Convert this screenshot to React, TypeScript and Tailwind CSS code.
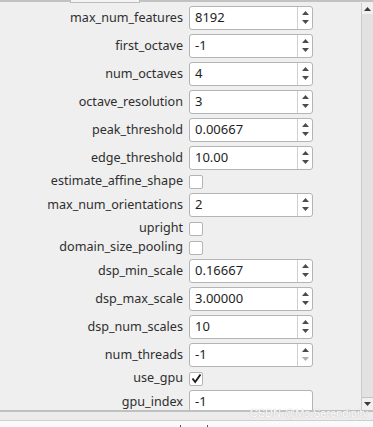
import React from "react";

type Row =
  | { kind: "spin"; label: string; value: string; downDisabled?: boolean }
  | { kind: "check"; label: string; checked?: boolean }
  | { kind: "line"; label: string; value: string };

const rows: Row[] = [
  { kind: "spin", label: "max_num_features", value: "8192" },
  { kind: "spin", label: "first_octave", value: "-1" },
  { kind: "spin", label: "num_octaves", value: "4" },
  { kind: "spin", label: "octave_resolution", value: "3" },
  { kind: "spin", label: "peak_threshold", value: "0.00667" },
  { kind: "spin", label: "edge_threshold", value: "10.00" },
  { kind: "check", label: "estimate_affine_shape" },
  { kind: "spin", label: "max_num_orientations", value: "2" },
  { kind: "check", label: "upright" },
  { kind: "check", label: "domain_size_pooling" },
  { kind: "spin", label: "dsp_min_scale", value: "0.16667" },
  { kind: "spin", label: "dsp_max_scale", value: "3.00000" },
  { kind: "spin", label: "dsp_num_scales", value: "10" },
  { kind: "spin", label: "num_threads", value: "-1", downDisabled: true },
  { kind: "check", label: "use_gpu", checked: true },
  { kind: "line", label: "gpu_index", value: "-1" },
];

function Arrow({ up, color }: { up: boolean; color: string }) {
  return (
    <svg width="7" height="4" viewBox="0 0 7 4" className="block">
      {up ? (
        <polygon points="0,4 7,4 3.5,0" fill={color} />
      ) : (
        <polygon points="0,0 7,0 3.5,4" fill={color} />
      )}
    </svg>
  );
}

function Field({ row }: { row: Row }) {
  if (row.kind === "check") {
    return (
      <div className="w-[14px] h-[14px] border border-[#b4b4b4] rounded-[2px] bg-white flex items-center justify-center">
        {row.checked && (
          <svg width="11" height="11" viewBox="0 0 11 11">
            <path d="M1.5 5.5 L4.2 9 L9.5 1.5" fill="none" stroke="#1a1a1a" strokeWidth="1.9" />
          </svg>
        )}
      </div>
    );
  }
  return (
    <div className="w-[124px] h-[24px] border border-[#b4b4b4] rounded-[3px] bg-white flex items-stretch">
      <div className="flex-1 flex items-center pl-[5px] text-[13px] text-[#1e1e1e]">{row.value}</div>
      {row.kind === "spin" && (
        <div className="w-[15px] border-l border-[#d0d0d0] flex flex-col items-center pt-[4px] gap-[5px]">
          <Arrow up color="#4c4c4c" />
          <Arrow up={false} color={row.downDisabled ? "#b0b0b0" : "#4c4c4c"} />
        </div>
      )}
    </div>
  );
}

export default function App() {
  return (
    <div
      className="w-[373px] h-[427px] bg-[#efefef] overflow-hidden flex flex-col"
      style={{ fontFamily: '"Noto Sans", "DejaVu Sans", sans-serif' }}
    >
      {/* top strip */}
      <div className="h-[3px] flex shrink-0">
        <div className="w-[70px] border-t-[2px] border-[#c2c2c2]" />
        <div className="w-[70px] border-x border-b border-[#bcbcbc] bg-[#f4f4f4]" />
        <div className="flex-1 border-t-[2px] border-[#c2c2c2]" />
      </div>
      {/* main */}
      <div className="h-[407px] flex shrink-0">
        <div className="flex-1 overflow-hidden pt-[3px]">
          <div className="flex flex-col gap-[4px]">
            {rows.map((r) => (
              <div key={r.label} className={`flex items-center ${r.kind === "check" ? "h-[15px]" : "h-[24px]"}`}>
                <div className="w-[183px] text-right text-[12.6px] text-[#2e2e2e] leading-none whitespace-nowrap">
                  {r.label}
                </div>
                <div className="ml-[6px]">
                  <Field row={r} />
                </div>
              </div>
            ))}
          </div>
        </div>
        {/* scrollbar */}
        <div className="w-[12px] border-l border-[#cdcdcd] flex flex-col">
          <div className="h-[11px] flex items-center justify-center bg-[#f0f0f0]">
            <Arrow up color="#3a3a3a" />
          </div>
          <div className="flex-1 bg-[#e2e2e2] border-b border-[#c4c4c4]" />
          <div className="h-[12px] flex items-center justify-center bg-[#f0f0f0]">
            <Arrow up={false} color="#3a3a3a" />
          </div>
        </div>
      </div>
      {/* bottom */}
      <div className="h-[2px] bg-[#c0c0c0] shrink-0" />
      <div className="h-[8px] bg-[#ececec] shrink-0 relative">
        <div
          className="absolute right-[5px] top-[-4px] text-[11px] leading-none text-[#ffffff]"
          style={{ fontFamily: '"Liberation Sans", sans-serif', textShadow: "0 0 1px #aaa" }}
        >
          CSDN @Ms.Serendipity
        </div>
      </div>
      <div className="h-[1px] bg-[#cfcfcf] shrink-0" />
      <div className="flex-1 bg-[#fafafa] relative">
        <div className="absolute left-[180px] top-[4px] w-[1px] h-[3px] bg-[#555]" />
        <div className="absolute left-[207px] top-[4px] w-[1px] h-[3px] bg-[#555]" />
      </div>
    </div>
  );
}
